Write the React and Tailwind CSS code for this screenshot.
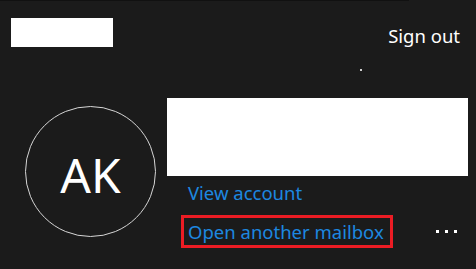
import React from "react";

const font = { fontFamily: '"Noto Sans", "Open Sans", sans-serif' };

function Avatar({ initials }) {
  return (
    <div className="ml-[25px] mt-[8px] w-[131px] h-[131px] shrink-0 rounded-full border border-[#d6d6d6] flex items-center justify-center">
      <span className="text-[48px] leading-none text-white mt-[6px]">{initials}</span>
    </div>
  );
}

export default function App() {
  return (
    <div
      className="relative w-[476px] h-[269px] overflow-hidden bg-[#1b1b1b]"
      style={font}
    >
      <div className="h-px w-[409px] bg-[#111111]" />
      {/* Header */}
      <div className="flex items-start justify-between pt-[17px] pl-[11px] pr-[16px]">
        <div className="w-[102px] h-[29px] bg-white" />
        <button className="mt-[6px] text-[18.5px] leading-[24px] text-white">Sign out</button>
      </div>

      {/* stray speck */}
      <div className="absolute left-[360px] top-[69px] w-[2px] h-[2px] bg-[#cfcfcf]" />

      {/* Account body */}
      <div className="flex items-start mt-[50px]">
        <Avatar initials="AK" />
        <div className="ml-[11px] w-[301px] flex flex-col">
          <div className="h-[78px] bg-white" />
          <a className="ml-[21px] mt-[5px] text-[18.5px] leading-[24px] text-[#1d88e0]">View account</a>
          <div className="mt-[10px] flex items-center justify-between">
            <div className="ml-[14px] h-[33px] border-[3px] border-[#ec1c24] pl-[4px] pr-[6px] flex items-center">
              <a className="text-[18.5px] leading-[24px] text-[#1d88e0]">Open another mailbox</a>
            </div>
            <div className="mr-[11px] flex gap-[6px]">
              <span className="w-[3px] h-[3px] bg-white" />
              <span className="w-[3px] h-[3px] bg-white" />
              <span className="w-[3px] h-[3px] bg-white" />
            </div>
          </div>
        </div>
      </div>
    </div>
  );
}
